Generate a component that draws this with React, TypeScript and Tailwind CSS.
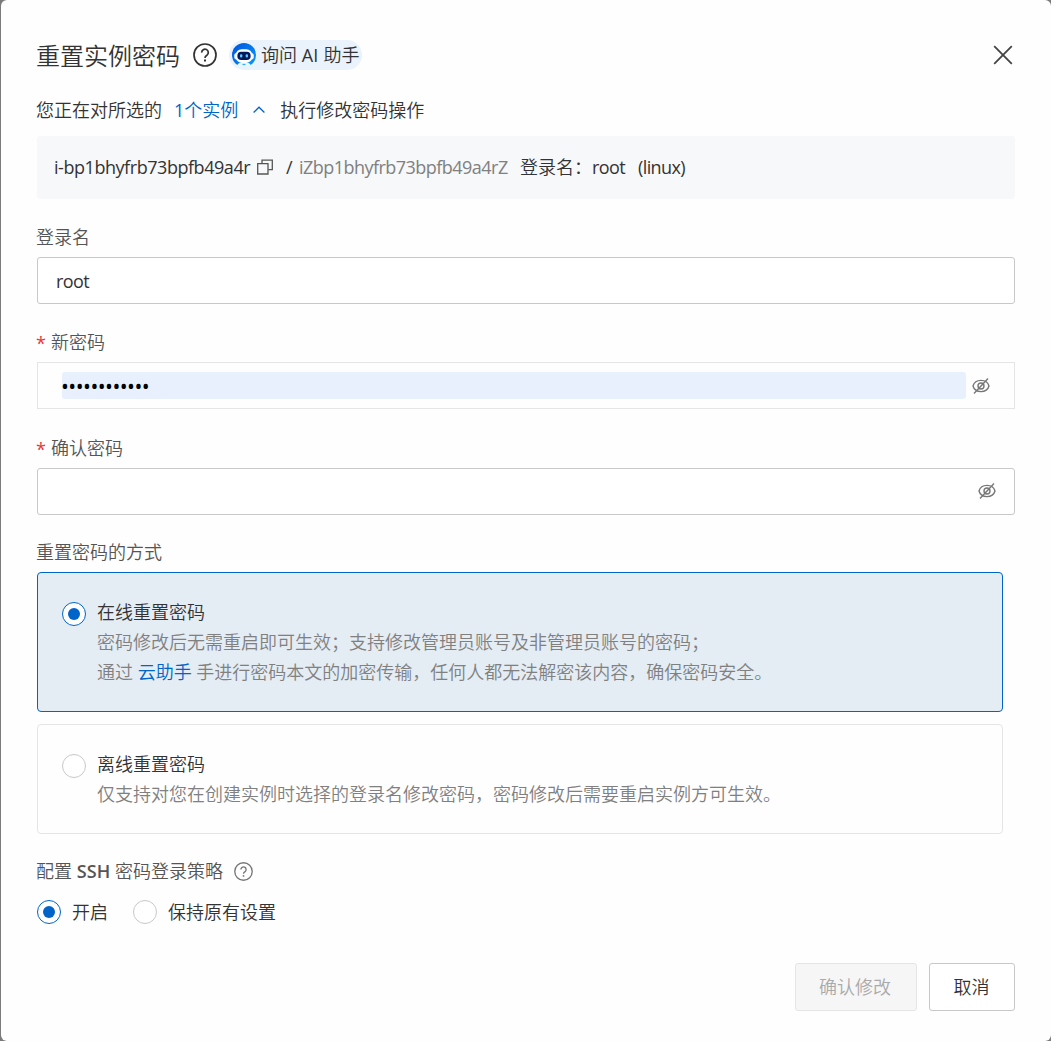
import type { ReactNode } from "react";

interface IconProps {
  className?: string;
}

function HelpIcon({ className }: IconProps) {
  return (
    <svg className={className} viewBox="0 0 24 24" fill="none" stroke="currentColor" strokeWidth={1.7} aria-hidden="true">
      <circle cx="12" cy="12" r="11" />
      <path d="M8.700 9.600a3.300 3.300 0 1 1 5.200 2.600c-1.200.8-1.900 1.300-1.900 2.700" />
      <path d="M12 16.600v2" strokeWidth={2} />
    </svg>
  );
}

function CloseIcon() {
  return (
    <svg className="w-5 h-5 text-[#444]" viewBox="0 0 20 20" fill="none" stroke="currentColor" strokeWidth={1.8} aria-hidden="true">
      <path d="M1.200 1.200l17.600 17.600M18.800 1.200L1.200 18.800" />
    </svg>
  );
}

function CopyIcon() {
  return (
    <svg className="w-4 h-4 text-[#555]" viewBox="0 0 16 16" fill="none" stroke="currentColor" strokeWidth={1.3} aria-hidden="true">
      <path d="M.7 4.700h10.300v10.300H.7z" />
      <path d="M5 4.500V1.200h10.300v9.400h-4" />
    </svg>
  );
}

function EyeOffIcon() {
  return (
    <svg className="w-[18px] h-4" viewBox="0 0 18 16" fill="none" stroke="currentColor" strokeWidth={1.4} aria-hidden="true">
      <path d="M1 8c1-3.500 4.200-5.600 8-5.600S16 4.500 17 8c-1 3.500-4.200 5.600-8 5.600S2 11.500 1 8z" />
      <circle cx="9" cy="8" r="3" />
      <path d="M16 .6L2 15.400" />
    </svg>
  );
}

function RobotIcon() {
  return (
    <svg className="w-6 h-6" viewBox="0 0 24 24" aria-hidden="true">
      <defs>
        <linearGradient id="robot" x1="0" y1="0" x2="1" y2="1">
          <stop offset="0" stopColor="#0052d9" />
          <stop offset="1" stopColor="#0a9cff" />
        </linearGradient>
      </defs>
      <circle cx="12" cy="12" r="12" fill="url(#robot)" />
      <path d="M5 24c-.2-3.500 3-5 7-5s7.200 1.500 7 5z" fill="#e6f6ff" />
      <rect x="2.200" y="10" width="19.600" height="6.500" rx="2.500" fill="#e6f6ff" />
      <rect x="3.600" y="6.200" width="16.800" height="13.600" rx="6" fill="#fff" />
      <rect x="5.400" y="8.800" width="13.200" height="8.200" rx="3.800" fill="#06185c" />
      <rect x="8" y="11.300" width="2.300" height="3.200" rx="1" fill="#59c8ff" />
      <rect x="13.700" y="11.300" width="2.300" height="3.200" rx="1" fill="#59c8ff" />
      <path d="M10.500 21.500h3" stroke="#35aef0" strokeWidth={1.300} />
    </svg>
  );
}

function Radio({ checked }: { checked?: boolean }) {
  return (
    <span
      className={`flex w-6 h-6 shrink-0 items-center justify-center rounded-full border bg-white ${
        checked ? "border-[#0064c8]" : "border-[#c8c8c8]"
      }`}
    >
      {checked && <span className="w-3 h-3 rounded-full bg-[#0064c8]" />}
    </span>
  );
}

function Label({ required, children }: { required?: boolean; children: ReactNode }) {
  return (
    <div className="-ml-px flex h-10 items-center text-[#555]">
      {required && <span className="w-[15px] pt-[2px] font-normal text-[#e8363a]">*</span>}
      {children}
    </div>
  );
}

interface MethodCardProps {
  title: string;
  checked?: boolean;
  className: string;
  children: ReactNode;
}

function MethodCard({ title, checked, className, children }: MethodCardProps) {
  return (
    <div className={`mr-3 flex rounded-[4px] border px-6 pt-6 ${className}`}>
      <div className="mr-[11px] pt-[5px]">
        <Radio checked={checked} />
      </div>
      <div className="leading-[30px] text-[#808080]">
        <div className="text-[#333]">{title}</div>
        {children}
      </div>
    </div>
  );
}

export default function App() {
  return (
    <div className="h-[1041px] w-[1051px] overflow-hidden bg-[#7b7b7b] pl-px">
      <div className="h-full rounded-[6px] bg-[#fefefe] px-9 pt-[35px] font-['Open_Sans','Noto_Sans_CJK_SC',sans-serif] text-[18px] font-[350] leading-6 text-[#333]">
        <div className="flex h-[39px] items-center">
          <h2 className="-ml-px pt-[3px] text-2xl font-[350] leading-9">重置实例密码</h2>
          <HelpIcon className="ml-[12.5px] w-6 h-6" />
          <div className="ml-[12.5px] flex h-[30px] w-[133px] items-center rounded-full bg-[#eaf2fb] pl-[3px]">
            <RobotIcon />
            <span className="ml-[5px] whitespace-nowrap">
              询问 <span className="font-normal tracking-[0.3px]">AI</span> 助手
            </span>
          </div>
          <button type="button" className="ml-auto mr-[2px]" aria-label="关闭">
            <CloseIcon />
          </button>
        </div>

        <div className="-ml-px flex h-[62px] items-center pt-[10px]">
          <span>您正在对所选的</span>
          <a className="ml-3 text-[#0064c8]">
            <span className="font-normal">1</span>个实例
          </a>
          <svg className="ml-[15px] w-3 h-3 text-[#0064c8]" viewBox="0 0 12 12" fill="none" stroke="currentColor" strokeWidth={1.3} aria-hidden="true">
            <path d="M.6 8.500L6 3.200l5.400 5.300" />
          </svg>
          <span className="ml-[15px]">执行修改密码操作</span>
        </div>

        <div className="flex h-[63px] items-center whitespace-pre rounded-[3px] bg-[#f7f8fa] pb-px pl-[17px]">
          <span className="w-[203px] font-normal tracking-[-0.45px]">i-bp1bhyfrb73bpfb49a4r</span>
          <CopyIcon />
          <span className="ml-[13px] w-[13px] font-normal">/</span>
          <span className="w-[221px] font-normal tracking-[-0.53px] text-[#808080]">iZbp1bhyfrb73bpfb49a4rZ</span>
          <span className="w-[72px]">登录名：</span>
          <span className="w-[46px] font-normal tracking-[-0.6px]">root</span>
          <span className="font-normal tracking-[-0.6px]">(linux)</span>
        </div>

        <div className="mt-[18px] h-[105px]">
          <Label>登录名</Label>
          <div className="flex h-[47px] items-center rounded-[3px] border border-[#c8c8c8] bg-white px-[18px] font-normal tracking-[-0.6px]">root</div>
        </div>

        <div className="h-[106px]">
          <Label required>新密码</Label>
          <div className="flex h-[47px] items-center border border-[#e5e5e5] px-6 text-[#777]">
            <div className="mr-[6px] flex h-[27px] w-[904px] items-center rounded-[3px] bg-[#e8f0fe] text-black">
              <span className="-ml-px font-['Open_Sans'] text-[21px] font-normal tracking-[-0.55px]">••••••••••••</span>
            </div>
            <EyeOffIcon />
          </div>
        </div>

        <div className="h-[104px]">
          <Label required>确认密码</Label>
          <div className="flex h-[47px] items-center justify-end rounded-[3px] border border-[#c8c8c8] bg-white pb-px pr-[18px] text-[#777]">
            <EyeOffIcon />
          </div>
        </div>

        <Label>重置密码的方式</Label>
        <MethodCard title="在线重置密码" checked className="h-[140px] border-[#0064c8] bg-[#e4ecf4]">
          <p>密码修改后无需重启即可生效；支持修改管理员账号及非管理员账号的密码；</p>
          <p>
            通过 <a className="text-[#0064c8]">云助手</a> 手进行密码本文的加密传输，任何人都无法解密该内容，确保密码安全。
          </p>
        </MethodCard>
        <MethodCard title="离线重置密码" className="mt-3 h-[110px] border-[#e5e5e5]">
          <p>仅支持对您在创建实例时选择的登录名修改密码，密码修改后需要重启实例方可生效。</p>
        </MethodCard>

        <div className="-ml-px mt-[17px] flex h-10 items-center text-[#555]">
          <span>
            配置 <span className="font-semibold tracking-[0.1px]">SSH</span> 密码登录策略
          </span>
          <HelpIcon className="ml-[11px] w-[19px] h-[19px] text-[#777]" />
        </div>
        <div className="flex h-[42px] items-center">
          <Radio checked />
          <span className="ml-[11px]">开启</span>
          <span className="ml-[25px]">
            <Radio />
          </span>
          <span className="ml-[11px]">保持原有设置</span>
        </div>

        <div className="mt-[30px] flex justify-end gap-3">
          <button type="button" className="h-12 w-[122px] rounded-[3px] border border-[#e5e5e5] bg-[#f6f6f6] pr-[2px] text-[#aaa]" disabled>
            确认修改
          </button>
          <button type="button" className="h-12 w-[86px] rounded-[3px] border border-[#c8c8c8] bg-white pr-px">
            取消
          </button>
        </div>
      </div>
    </div>
  );
}
